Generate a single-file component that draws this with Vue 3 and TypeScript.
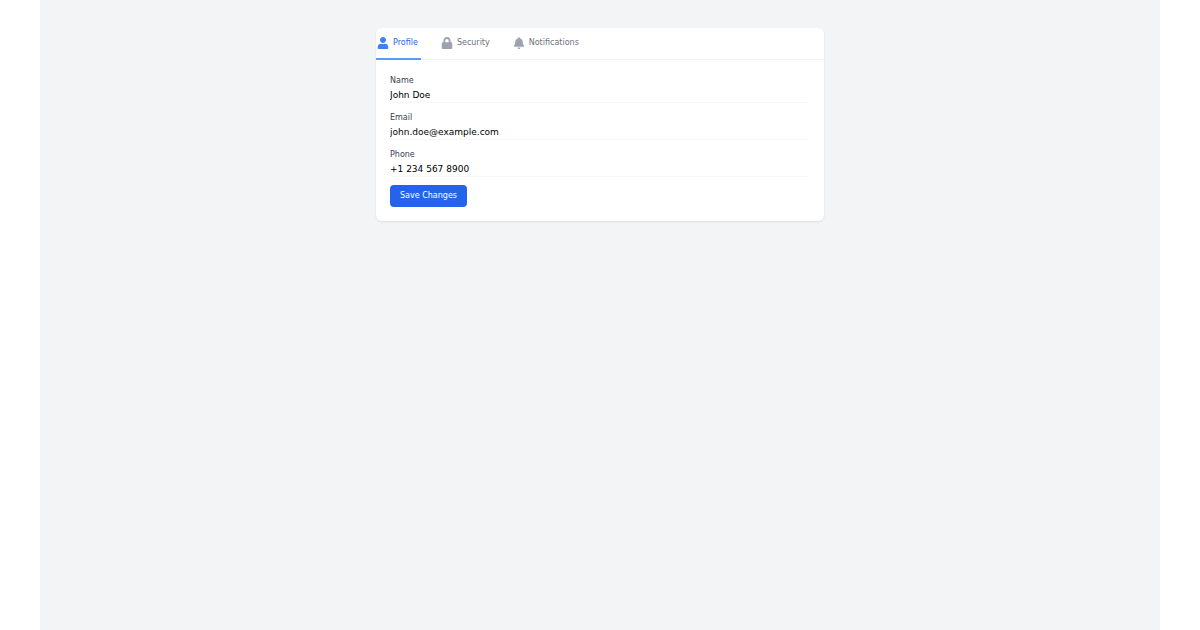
<script setup lang="ts">
import { ref } from 'vue'

type TabId = 'profile' | 'security' | 'notifications'

interface Tab {
  id: TabId
  label: string
  icon: string
}

interface Field {
  id: string
  label: string
  type: string
  value: string
}

const tabs: Tab[] = [
  {
    id: 'profile',
    label: 'Profile',
    icon: 'M224 256c70.7 0 128-57.3 128-128S294.7 0 224 0 96 57.3 96 128s57.3 128 128 128zm89.600 32h-16.700c-22.200 10.200-46.900 16-72.900 16s-50.600-5.800-72.900-16h-16.700C60.200 288 0 348.200 0 422.400V464c0 26.500 21.500 48 48 48h352c26.500 0 48-21.500 48-48v-41.600c0-74.200-60.200-134.400-134.400-134.400z',
  },
  {
    id: 'security',
    label: 'Security',
    icon: 'M400 224h-24v-72C376 68.200 307.800 0 224 0S72 68.200 72 152v72H48c-26.500 0-48 21.500-48 48v192c0 26.500 21.500 48 48 48h352c26.500 0 48-21.500 48-48V272c0-26.500-21.500-48-48-48zm-104 0H152v-72c0-39.700 32.300-72 72-72s72 32.300 72 72v72z',
  },
  {
    id: 'notifications',
    label: 'Notifications',
    icon: 'M224 512c35.320 0 63.970-28.650 63.970-64H160.030c0 35.350 28.650 64 63.970 64zm215.390-149.710c-19.320-20.760-55.470-51.990-55.470-154.290 0-77.700-54.480-139.900-127.940-155.160V32c0-17.670-14.320-32-31.980-32s-31.980 14.330-31.980 32v20.840C118.560 68.100 64.080 130.300 64.080 208c0 102.300-36.150 133.530-55.470 154.290-6 6.450-8.660 14.160-8.610 21.710.11 16.400 12.980 32 32.100 32h383.800c19.120 0 32-15.600 32.100-32 .05-7.550-2.610-15.270-8.610-21.710z',
  },
]

const active = ref<TabId>('profile')

const fields = ref<Field[]>([
  { id: 'name', label: 'Name', type: 'text', value: 'John Doe' },
  { id: 'email', label: 'Email', type: 'email', value: 'john.doe@example.com' },
  { id: 'phone', label: 'Phone', type: 'tel', value: '+1 234 567 8900' },
])
</script>

<template>
  <main class="page">
    <section class="card">
      <nav class="tabs" aria-label="Account settings">
        <button
          v-for="tab in tabs"
          :key="tab.id"
          type="button"
          class="tab"
          :class="{ active: tab.id === active }"
          @click="active = tab.id"
        >
          <svg class="icon" viewBox="0 0 448 512" aria-hidden="true">
            <path :d="tab.icon" fill="currentColor" />
          </svg>
          <span>{{ tab.label }}</span>
        </button>
      </nav>
      <form v-if="active === 'profile'" class="form" @submit.prevent>
        <div v-for="field in fields" :key="field.id" class="field">
          <label :for="field.id">{{ field.label }}</label>
          <input :id="field.id" v-model="field.value" :type="field.type" />
        </div>
        <button type="submit" class="save">Save Changes</button>
      </form>
    </section>
  </main>
</template>

<style>
body {
  margin: 0;
  background: #fff;
}
</style>

<style scoped>
.page {
  box-sizing: border-box;
  min-height: 100vh;
  margin: 0 40px;
  padding: 28px;
  background: #f3f4f6;
  font-family: "DejaVu Sans", sans-serif;
}

.card {
  max-width: 448px;
  margin: 0 auto;
  border-radius: 6px;
  background: #fff;
  box-shadow: 0 1px 2px rgb(0 0 0 / 10%);
}

.tabs {
  display: flex;
  gap: 19px;
  border-bottom: 1px solid #f0f1f3;
}

.tab {
  display: flex;
  align-items: center;
  gap: 4px;
  margin-bottom: -1px;
  padding: 8px 3px 8px 1px;
  border: 0;
  border-bottom: 2px solid transparent;
  background: none;
  color: #6b7280;
  font-family: inherit;
  font-size: 8px;
  line-height: 14px;
  cursor: pointer;
}

.icon {
  width: 12px;
  height: 12px;
  color: #9ca3af;
}

.active {
  border-color: #5b9bf8;
  color: #2563eb;
}

.active .icon {
  color: #3b82f6;
}

.form {
  display: flex;
  flex-direction: column;
  gap: 8px;
  padding: 14px;
}

.field {
  display: flex;
  flex-direction: column;
}

.field label {
  color: #374151;
  font-size: 8px;
  line-height: 14px;
}

.field input {
  margin: 0;
  padding: 0;
  border: 0;
  border-bottom: 1px solid #f6f7f8;
  border-radius: 4px;
  background: none;
  color: #000;
  font-family: inherit;
  font-size: 9px;
  line-height: 14px;
}

.save {
  align-self: flex-start;
  padding: 4px 10px;
  border: 0;
  border-radius: 4px;
  background: #2563eb;
  color: #fff;
  font-family: inherit;
  font-size: 8px;
  line-height: 14px;
  cursor: pointer;
}
</style>
